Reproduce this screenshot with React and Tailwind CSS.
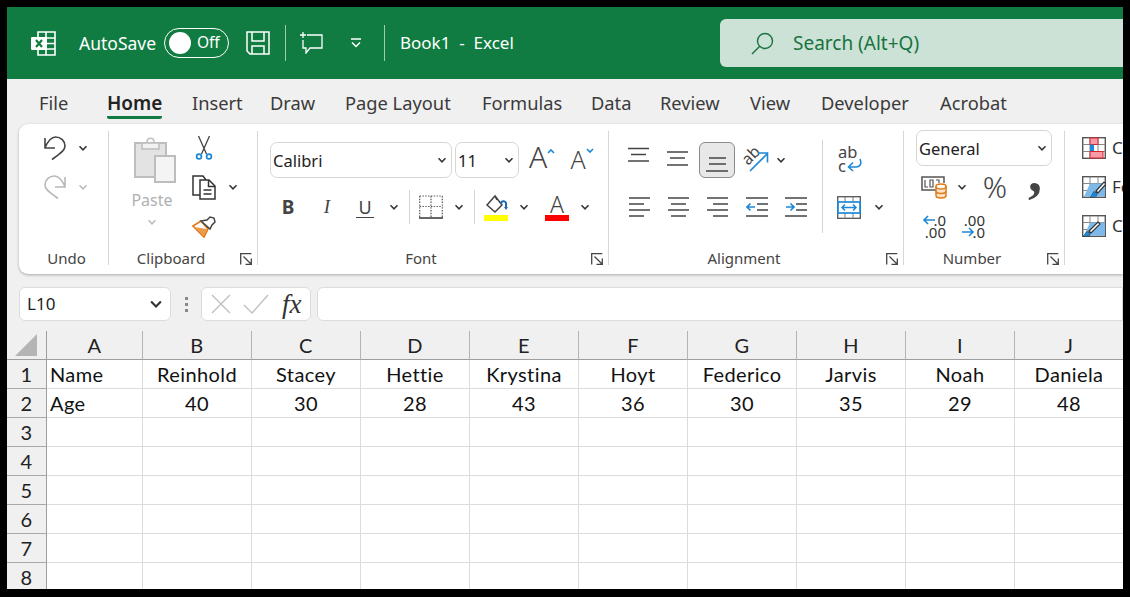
const COLUMNS = ["A", "B", "C", "D", "E", "F", "G", "H", "I", "J", "K"];
const ROW1 = ["Name", "Reinhold", "Stacey", "Hettie", "Krystina", "Hoyt", "Federico", "Jarvis", "Noah", "Daniela", ""];
const ROW2 = ["Age", "40", "30", "28", "43", "36", "30", "35", "29", "48", ""];
const TABS = [
  ["File", "w-[68px]"],
  ["Home", "w-[85px]"],
  ["Insert", "w-[78px]"],
  ["Draw", "w-[75px]"],
  ["Page Layout", "w-[137px]"],
  ["Formulas", "w-[109px]"],
  ["Data", "w-[69px]"],
  ["Review", "w-[90px]"],
  ["View", "w-[71px]"],
  ["Developer", "w-[119px]"],
  ["Acrobat", "w-[90px]"],
];

function Chev({ color = "#333", size = 10 }) {
  return (
    <svg width={size} height={size} viewBox="0 0 10 10" className="shrink-0">
      <path d="M1.5 3.2 5 6.8 8.5 3.2" fill="none" stroke={color} strokeWidth="1.5" />
    </svg>
  );
}

function Launcher() {
  return (
    <svg width="12" height="12" viewBox="0 0 12 12" className="shrink-0 mt-[2px]">
      <path d="M.7 11.5V.7h10.6M3.5 3.5l7.5 7.5M5.5 11.3h5.8V5.5" fill="none" stroke="#444" strokeWidth="1.3" />
    </svg>
  );
}

function Sep({ h = "h-[34px]", cls = "" }) {
  return <div className={`w-px bg-[#d4d4d4] shrink-0 ${h} ${cls}`} />;
}

function Lines({ rows, w = 22, h = 24 }) {
  return (
    <svg width={w} height={h} viewBox={`0 0 ${w} ${h}`} className="shrink-0">
      {rows.map(([a, b, y], i) => (
        <line key={i} x1={a} x2={b} y1={y} y2={y} stroke="#444" strokeWidth="1.4" />
      ))}
    </svg>
  );
}

function Group({ label, launcher = true, widthClass, children, last = false, labelClass = "pr-[7px]" }) {
  return (
    <section className={`flex flex-col h-[134px] shrink-0 ${widthClass} ${last ? "" : "border-r border-[#d6d6d6]"}`}>
      <div className="flex-1 min-h-0">{children}</div>
      {label ? (
        <div className="flex items-center h-[20px] -mb-[3px] pr-[5px]">
          <div className={`flex-1 text-center text-[15px] text-[#444] ${labelClass}`}>{label}</div>
          {launcher ? <Launcher /> : null}
        </div>
      ) : null}
    </section>
  );
}

function Undo({ color }) {
  return (
    <svg width="24" height="26" viewBox="0 0 24 26" fill="none" stroke={color} strokeWidth="1.6">
      <path d="M2 3v10h10M2 12.7C5 6 8 2 12.5 2 18 2 22 6 22 11c0 4-3 6-13 13.5" />
    </svg>
  );
}

function Excel() {
  return (
    <svg width="25" height="25" viewBox="0 0 25 25">
      <path d="M7 1h17v23H7z" fill="none" stroke="#fff" strokeWidth="1.6" />
      <path d="M15 1v23M15 7h9M15 12.5h9M15 18h9M7 18h8" stroke="#fff" strokeWidth="1.6" />
      <rect x="0" y="6" width="16" height="13" rx="1" fill="#fff" />
      <path d="M5 9l6 7M11 9l-6 7" stroke="#107c41" strokeWidth="2.2" />
    </svg>
  );
}

function Paste() {
  return (
    <svg width="42" height="46" viewBox="0 0 42 46">
      <rect x="1" y="6" width="31" height="34" fill="#e3e3e3" stroke="#bdbdbd" strokeWidth="2" />
      <path d="M8 6h17v6H8z" fill="#f2f2f2" stroke="#bdbdbd" strokeWidth="1.5" />
      <path d="M13 5c0-5 7-5 7 0" fill="none" stroke="#bdbdbd" strokeWidth="1.5" />
      <rect x="21" y="19" width="20" height="26" fill="#f4f4f4" stroke="#bdbdbd" strokeWidth="2" />
    </svg>
  );
}

function Scissors() {
  return (
    <svg width="18" height="24" viewBox="0 0 18 24" fill="none">
      <path d="M3.5 0l8 18M14.5 0l-8 18" stroke="#444" strokeWidth="1.3" />
      <circle cx="4" cy="20.5" r="2.4" stroke="#1e88d8" strokeWidth="1.7" />
      <circle cx="14" cy="20.5" r="2.4" stroke="#1e88d8" strokeWidth="1.7" />
    </svg>
  );
}

function Copy() {
  return (
    <svg width="24" height="25" viewBox="0 0 24 25" fill="none" stroke="#333" strokeWidth="1.5">
      <path d="M8 20H1V1h10l3 4" />
      <path d="M8 5h9l6 6v13H8z" fill="#fff" />
      <path d="M16.5 5v6.500h6.500M11.500 15h8M11.500 19h8" />
    </svg>
  );
}

function Brush() {
  return (
    <svg width="24" height="23" viewBox="0 0 24 23" fill="none">
      <path d="M1 11l8-5 7 8-4 8z" fill="#fff" stroke="#e07b1a" strokeWidth="1.7" />
      <path d="M2 12l13 2-3 7z" fill="#ee9a4b" />
      <path d="M9 6l6-1 3-3 4 1 1 4-3 3-2 4z" fill="#fff" stroke="#444" strokeWidth="1.5" />
    </svg>
  );
}

function FillColor() {
  return (
    <svg width="24" height="24" viewBox="0 0 24 24" fill="none" className="block">
      <path d="M3 12l8-9 7 9-7 7z" stroke="#444" strokeWidth="1.5" />
      <path d="M11 3l2 4" stroke="#444" strokeWidth="1.5" />
      <path d="M17 11c0-3 4-4 5-1v4" stroke="#1b6cb5" strokeWidth="2" />
      <path d="M20 14l2 3 2-3z" fill="#1b6cb5" />
    </svg>
  );
}

function Borders() {
  return (
    <svg width="24" height="24" viewBox="0 0 24 24" fill="none" stroke="#555" strokeWidth="1.2" strokeDasharray="1.4 1.4">
      <path d="M.7 1h22.6M.7 1v21M23.300 1v21M12 1v21M.7 11.500h22.600" />
      <path d="M0 23h24" strokeDasharray="none" stroke="#333" strokeWidth="1.6" />
    </svg>
  );
}

function Indent({ flip }) {
  return (
    <svg width="22" height="20" viewBox="0 0 22 20" fill="none">
      <path d="M0 1h22M11 7h11M11 13h11M0 19h22" stroke="#444" strokeWidth="1.4" />
      {flip ? (
        <path d="M1 10h8M4.500 6.500 1 10l3.500 3.500" stroke="#1e88d8" strokeWidth="1.7" />
      ) : (
        <path d="M1 10h8M5.500 6.500 9 10l-3.500 3.500" stroke="#1e88d8" strokeWidth="1.7" />
      )}
    </svg>
  );
}

function SheetIcon({ kind }) {
  return (
    <svg width="24" height="22" viewBox="0 0 24 22" fill="none" className="shrink-0">
      <rect x=".7" y=".7" width="22.600" height="20.600" fill="#fff" stroke="#555" strokeWidth="1.4" />
      <path d="M8 .7v20.600M16 .7v20.600M.7 7.500h22.600M.7 14.500h22.600" stroke="#888" strokeWidth="1" />
      {kind === "cond" ? (
        <>
          <rect x="8" y="1" width="8" height="6.500" fill="#f79aa6" stroke="#d8242f" />
          <rect x="8" y="7.500" width="4" height="7" fill="#1e88d8" />
          <rect x="8" y="14.500" width="13" height="6.500" fill="#f79aa6" stroke="#d8242f" />
        </>
      ) : null}
      {kind === "table" ? (
        <>
          <path d="M8 7.500h15v13H2z" fill="#7db9ea" />
          <path d="M9 21l3-5 3 1-1 3zM14 15l8-9 2 2-8 9z" fill="#fff" stroke="#333" strokeWidth="1.200" />
          <path d="M8 21l4-5 3 1-1 4z" fill="#1e88d8" />
        </>
      ) : null}
      {kind === "cell" ? (
        <>
          <path d="M8 7.500h15v13H2z" fill="#7db9ea" />
          <path d="M2 21l3-4 3 1-1 3zM7 16l9-9 2 2-9 9z" fill="#fff" stroke="#333" strokeWidth="1.200" />
          <path d="M1 21l4-4 3 1-1 3z" fill="#1e88d8" />
        </>
      ) : null}
    </svg>
  );
}

function Select({ children, widthClass }) {
  return (
    <div className={`flex items-center justify-between ${widthClass} h-[36px] shrink-0 rounded-[7px] border border-[#d6d6d6] bg-white pl-[2px] pr-[4px] text-[16.5px] text-[#222]`}>
      <span className="pt-[2px]">{children}</span>
      <Chev />
    </div>
  );
}

function Slot({ w, h = "h-[34px]", children, cls = "" }) {
  return <div className={`flex items-center justify-center shrink-0 ${w} ${h} ${cls}`}>{children}</div>;
}

function Ribbon() {
  return (
    <div className="flex ml-[12px] h-[150px] shrink-0 rounded-l-[9px] bg-white pt-[7px] shadow-[0_1px_3px_rgba(0,0,0,0.3)] overflow-hidden">
      <Group label="Undo" launcher={false} widthClass="w-[90px] pl-[17px]" labelClass="pr-[6px]">
        <div className="flex flex-col gap-[5px]">
          <div className="flex items-center h-[34px]">
            <Slot w="w-[38px]"><Undo color="#444" /></Slot>
            <div className="ml-[4px]"><Chev /></div>
          </div>
          <div className="flex items-center h-[34px]">
            <Slot w="w-[38px]"><div className="-scale-x-100"><Undo color="#b8b8b8" /></div></Slot>
            <div className="ml-[4px]"><Chev color="#bbb" /></div>
          </div>
        </div>
      </Group>

      <Group label="Clipboard" widthClass="w-[149px]">
        <div className="flex pl-[20px]">
          <div className="flex flex-col items-center w-[46px] pt-[6px]">
            <div className="ml-[6px]"><Paste /></div>
            <div className="mt-[6px] leading-[22px] text-[16px] text-[#b0b0b0]">Paste</div>
            <div className="mt-[6px]"><Chev color="#bbb" /></div>
          </div>
          <div className="flex flex-col gap-[5px] ml-[8px]">
            <div className="flex items-center h-[34px]"><Slot w="w-[42px]"><Scissors /></Slot></div>
            <div className="flex items-center h-[34px]">
              <Slot w="w-[42px]"><Copy /></Slot>
              <div className="ml-[3px]"><Chev /></div>
            </div>
            <div className="flex items-center h-[34px]"><Slot w="w-[42px]"><Brush /></Slot></div>
          </div>
        </div>
      </Group>

      <Group label="Font" widthClass="w-[351px]">
        <div className="pl-[12px] pt-[11px]">
          <div className="flex items-center h-[36px]">
            <Select widthClass="w-[182px]">Calibri</Select>
            <div className="ml-[3px]"><Select widthClass="w-[64px]">11</Select></div>
            <Slot w="w-[40px]" h="h-[36px]" cls="ml-[3px]">
              <span className="text-[30px] leading-none font-light -mt-[6px] text-[#444]">A</span>
              <svg width="8" height="6" viewBox="0 0 8 6" className="self-start mt-[6px]"><path d="M1 5l3-3 3 3" fill="none" stroke="#1e88d8" strokeWidth="1.600" /></svg>
            </Slot>
            <Slot w="w-[40px]" h="h-[36px]">
              <span className="text-[25px] leading-none font-light -mt-[1px] text-[#444]">A</span>
              <svg width="8" height="6" viewBox="0 0 8 6" className="self-start mt-[6px]"><path d="M1 1l3 3 3-3" fill="none" stroke="#1e88d8" strokeWidth="1.600" /></svg>
            </Slot>
          </div>
          <div className="flex items-center h-[34px] mt-[12px]">
            <Slot w="w-[36px]"><span className="text-[19px] font-bold text-[#444]">B</span></Slot>
            <Slot w="w-[42px]"><span className="text-[19px] italic text-[#444] font-['Liberation_Serif',serif]">I</span></Slot>
            <Slot w="w-[34px]"><span className="text-[18px] leading-[20px] border-b-[1.5px] border-[#444] px-[2px] text-[#444]">U</span></Slot>
            <Slot w="w-[24px]"><Chev /></Slot>
            <Sep cls="ml-[3px]" />
            <Slot w="w-[42px]"><Borders /></Slot>
            <Slot w="w-[14px]"><Chev /></Slot>
            <Sep cls="ml-[8px]" />
            <Slot w="w-[42px]">
              <div className="flex flex-col items-start w-[24px]">
                <FillColor />
                <div className="w-[24px] h-[6px] -mt-[2px] bg-[#ffff00]" />
              </div>
            </Slot>
            <Slot w="w-[14px]"><Chev /></Slot>
            <Slot w="w-[44px]" cls="ml-[4px]">
              <div className="flex flex-col items-center w-[24px]">
                <span className="text-[23px] leading-[22px] font-light text-[#444]">A</span>
                <div className="w-[24px] h-[6px] bg-[#ff0000]" />
              </div>
            </Slot>
            <Slot w="w-[12px]"><Chev /></Slot>
          </div>
        </div>
      </Group>

      <Group label="Alignment" widthClass="w-[295px]">
        <div className="flex pl-[11px]">
          <div className="w-[202px] pt-[11px]">
            <div className="flex items-center h-[36px]">
              <Slot w="w-[38px]" h="h-[36px]"><Lines h={36} rows={[[0, 21, 6.5], [3, 18, 12.5], [0, 21, 19]]} /></Slot>
              <Slot w="w-[40px]" h="h-[36px]"><Lines h={36} rows={[[0, 21, 10], [3, 18, 16], [0, 21, 23]]} /></Slot>
              <Slot w="w-[36px]" h="h-[36px]" cls="ml-[1px] rounded-[6px] border border-[#8a8a8a] bg-[#e8e8e8]"><Lines h={34} rows={[[3, 20, 15], [3, 20, 21], [0, 22, 28]]} /></Slot>
              <Slot w="w-[38px]" h="h-[36px]" cls="ml-[3px] relative">
                <span className="absolute left-[3px] top-[4px] -rotate-45 text-[16px] leading-[18px] text-[#444]">ab</span>
                <svg width="24" height="24" viewBox="0 0 24 24" className="absolute left-[8px] top-[7px]"><path d="M4 22 21 5M12 4h9.500v9.500" fill="none" stroke="#1e88d8" strokeWidth="1.600" /></svg>
              </Slot>
              <Chev />
            </div>
            <div className="flex items-center h-[34px] mt-[12px]">
              <Slot w="w-[39px]"><Lines rows={[[0, 21, 3], [0, 15, 9], [0, 21, 15], [0, 15, 21]]} /></Slot>
              <Slot w="w-[39px]"><Lines rows={[[0, 21, 3], [3, 18, 9], [0, 21, 15], [3, 18, 21]]} /></Slot>
              <Slot w="w-[39px]"><Lines rows={[[0, 21, 3], [6, 21, 9], [0, 21, 15], [6, 21, 21]]} /></Slot>
              <Slot w="w-[39px]"><Indent flip /></Slot>
              <Slot w="w-[39px]"><Indent /></Slot>
            </div>
          </div>
          <Sep h="h-[93px]" cls="mt-[9px]" />
          <div className="pt-[11px]">
            <Slot w="w-[56px]" h="h-[36px]">
              <div className="flex flex-col items-start w-[26px] h-[30px] text-[16.5px] leading-[14px] text-[#444]">
                <span>ab</span>
                <div className="flex items-center">
                  <span>c</span>
                  <svg width="15" height="14" viewBox="0 0 15 14" className="ml-[1px] -mt-[2px]"><path d="M13 1c2 5 0 8-4 8H2M6 4.500 1.500 9 6 13" fill="none" stroke="#1e88d8" strokeWidth="1.600" /></svg>
                </div>
              </div>
            </Slot>
            <div className="flex items-center h-[34px] mt-[12px]">
              <Slot w="w-[51px]">
                <svg width="24" height="23" viewBox="0 0 24 23" fill="none">
                  <rect x=".7" y=".7" width="22.600" height="21.600" stroke="#555" strokeWidth="1.300" />
                  <path d="M8 .7v21M16 .7v21" stroke="#777" />
                  <rect x="1" y="6" width="22" height="11" fill="#fff" stroke="#1e88d8" strokeWidth="1.700" />
                  <path d="M5 11.500h14M8 8.500l-3 3 3 3M16 8.500l3 3-3 3" stroke="#1e88d8" strokeWidth="1.500" />
                </svg>
              </Slot>
              <Chev />
            </div>
          </div>
        </div>
      </Group>

      <Group label="Number" widthClass="w-[161px]">
        <div className="pl-[12px] -mt-px">
          <Select widthClass="w-[136px]">General</Select>
          <div className="flex items-center h-[34px] mt-[4px]">
            <Slot w="w-[30px]" cls="ml-[3px]">
              <svg width="26" height="24" viewBox="0 0 26 24" fill="none">
                <path d="M15 15H1V2h22v6" stroke="#555" strokeWidth="1.500" />
                <path d="M4 5v7h3M9 5h3v7H9zM15 5h3v3" stroke="#555" strokeWidth="1.200" />
                <path d="M15 11.500v9c0 3.300 10 3.300 10 0v-9z" fill="#fbe3c9" stroke="#e07b1a" strokeWidth="1.500" />
                <ellipse cx="20" cy="11.500" rx="5" ry="2.500" fill="#fff" stroke="#e07b1a" strokeWidth="1.500" />
                <path d="M15 16c0 3.300 10 3.300 10 0" stroke="#e07b1a" strokeWidth="1.500" />
              </svg>
            </Slot>
            <Slot w="w-[10px]" cls="ml-[8px]"><Chev /></Slot>
            <Slot w="w-[44px]" cls="ml-[6px]"><span className="text-[30px] font-light leading-none text-[#444]">%</span></Slot>
            <Slot w="w-[36px]"><span className="text-[56px] font-bold leading-none -mt-[30px] text-[#444] font-['Liberation_Serif',serif]">,</span></Slot>
          </div>
          <div className="flex items-center h-[34px] mt-[5px]">
            <Slot w="w-[31px]" cls="ml-[2px]">
              <div className="flex flex-col items-end w-[25px] text-[15px] leading-[12px] text-[#333]">
                <div className="flex items-center">
                  <svg width="14" height="10" viewBox="0 0 14 10" className="shrink-0 mr-[-3px]"><path d="M13 5H2M6 1 2 5l4 4" fill="none" stroke="#1e88d8" strokeWidth="1.600" /></svg>
                  <span>.0</span>
                </div>
                <span>.00</span>
              </div>
            </Slot>
            <Slot w="w-[31px]" cls="ml-[8px]">
              <div className="flex flex-col items-end w-[25px] text-[15px] leading-[12px] text-[#333]">
                <span>.00</span>
                <div className="flex items-center">
                  <svg width="14" height="10" viewBox="0 0 14 10" className="shrink-0 mr-[-3px]"><path d="M1 5h11M8 1l4 4-4 4" fill="none" stroke="#1e88d8" strokeWidth="1.600" /></svg>
                  <span>.0</span>
                </div>
              </div>
            </Slot>
          </div>
        </div>
      </Group>

      <Group widthClass="w-[200px] pl-[17px]" last>
        <div className="flex flex-col gap-[5px] text-[17px] text-[#333] whitespace-nowrap">
          <div className="flex items-center gap-[6px] h-[34px]"><SheetIcon kind="cond" /><span>Conditional Formatting</span></div>
          <div className="flex items-center gap-[6px] h-[34px]"><SheetIcon kind="table" /><span>Format as Table</span></div>
          <div className="flex items-center gap-[6px] h-[34px]"><SheetIcon kind="cell" /><span>Cell Styles</span></div>
        </div>
      </Group>
    </div>
  );
}

function HeaderCell({ children }) {
  return (
    <div className="flex items-center justify-center h-[29px] border-r border-b border-r-[#b4b4b4] border-b-[#9e9e9e] bg-[#f0f0f0] text-[#222]">
      {children}
    </div>
  );
}

function Sheet() {
  const rows = [ROW1, ROW2, [], [], [], [], [], []];
  return (
    <div className="grid grid-cols-[40px_96px_repeat(10,109px)] auto-rows-[29px] mt-[10px] font-['Lato','Liberation_Sans',sans-serif] text-[20px] tracking-[0.4px] leading-none">
      <div className="flex items-center justify-center h-[29px] border-r border-b border-r-[#9e9e9e] border-b-[#9e9e9e] bg-[#f0f0f0]">
        <svg width="22" height="22" viewBox="0 0 22 22" className="-ml-[2px]"><path d="M22 0v22H0z" fill="#b5b5b5" /></svg>
      </div>
      {COLUMNS.map((c) => (
        <HeaderCell key={c}>{c}</HeaderCell>
      ))}
      {rows.map((row, r) => (
        <div key={r} className="contents">
          <div className="flex items-center justify-center h-[29px] border-r border-b border-r-[#9e9e9e] border-b-[#a8a8a8] bg-[#f0f0f0] text-[#222]">{r + 1}</div>
          {COLUMNS.map((c, i) => (
            <div
              key={c}
              className={`flex items-center h-[29px] bg-white border-r border-b border-[#dcdcdc] text-[#111] ${i === 0 ? "justify-start pl-[3px]" : "justify-center"}`}
            >
              {row[i] || ""}
            </div>
          ))}
        </div>
      ))}
    </div>
  );
}

export default function App() {
  return (
    <div className="w-[1130px] h-[597px] bg-black pl-[7px] pt-[7px] overflow-hidden font-['Noto_Sans','Open_Sans',sans-serif]">
      <div className="flex flex-col w-[1116px] h-[582px] bg-[#f0f0f0] overflow-hidden">
        <header className="flex items-center h-[72px] shrink-0 bg-[#107c41] text-white">
          <div className="ml-[24px]"><Excel /></div>
          <span className="ml-[23px] w-[85px] text-[17.5px]">AutoSave</span>
          <div className="flex items-center w-[65px] h-[30px] rounded-full border border-white pl-[4px]">
            <div className="w-[22px] h-[22px] rounded-full bg-white" />
            <span className="ml-[6px] text-[15.5px]">Off</span>
          </div>
          <svg width="24" height="24" viewBox="0 0 24 24" fill="none" stroke="#fff" strokeWidth="1.500" className="ml-[17px]">
            <path d="M1 1h22v22H4l-3-3z" />
            <path d="M6 1v9h12V1M6 23v-8h12v8" />
          </svg>
          <div className="ml-[15px] w-px h-[36px] bg-[#9fcbb2]" />
          <svg width="24" height="22" viewBox="0 0 24 22" fill="none" stroke="#fff" strokeWidth="1.300" className="ml-[13px]">
            <path d="M8 3h15v13H11l-4 5v-5H4V8M4 0v6M1 3h6" />
          </svg>
          <svg width="12" height="10" viewBox="0 0 12 10" fill="none" stroke="#fff" strokeWidth="1.500" className="ml-[27px]">
            <path d="M1 1h10M2 4.500l4 4 4-4" />
          </svg>
          <div className="ml-[22px] w-px h-[36px] bg-[#9fcbb2]" />
          <span className="ml-[15px] text-[17px] whitespace-pre">Book1  -  Excel</span>
          <div className="ml-auto flex items-center w-[403px] shrink-0 h-[48px] rounded-l-[6px] bg-[#cde2d6] pl-[31px] text-[#17733f]">
            <svg width="23" height="23" viewBox="0 0 23 23" fill="none" stroke="#17733f" strokeWidth="1.400">
              <circle cx="14" cy="9" r="7.500" />
              <path d="M8.500 14.500 1 22" />
            </svg>
            <span className="ml-[19px] text-[19px]">Search (Alt+Q)</span>
          </div>
        </header>

        <nav className="flex items-start h-[45px] shrink-0 pl-[32px] pt-[12px] text-[18.3px] leading-[24px] text-[#3b3b3b]">
          {TABS.map(([name, w]) => (
            <div key={name} className={`shrink-0 ${w}`}>
              {name === "Home" ? (
                <span className="inline-block text-[19px] font-semibold text-[#222] border-b-[3px] border-[#107c41] rounded-b-[2px] pb-[1px]">{name}</span>
              ) : (
                name
              )}
            </div>
          ))}
        </nav>

        <Ribbon />

        <div className="flex items-center h-[34px] shrink-0 mt-[13px] ml-[12px]">
          <div className="flex items-center justify-between w-[152px] h-[34px] rounded-[6px] border border-[#dcdcdc] bg-white pl-[7px] pr-[7px] text-[17px] text-[#222]">
            <span>L10</span>
            <Chev size={14} />
          </div>
          <div className="flex flex-col gap-[3px] ml-[14px] mr-[13px]">
            <div className="w-[3px] h-[3px] bg-[#888]" />
            <div className="w-[3px] h-[3px] bg-[#888]" />
            <div className="w-[3px] h-[3px] bg-[#888]" />
          </div>
          <div className="flex items-center w-[110px] h-[34px] rounded-[6px] border border-[#dcdcdc] bg-white">
            <svg width="20" height="20" viewBox="0 0 20 20" fill="none" stroke="#c0c0c0" strokeWidth="1.400" className="ml-[9px] shrink-0"><path d="M1 1l18 18M19 1 1 19" /></svg>
            <svg width="26" height="20" viewBox="0 0 26 20" fill="none" stroke="#c0c0c0" strokeWidth="1.400" className="ml-[12px] shrink-0"><path d="M1 11l8 8L25 1" /></svg>
            <span className="ml-[13px] text-[27px] italic leading-none text-[#333] font-['Liberation_Serif',serif]">fx</span>
          </div>
          <div className="ml-[6px] flex-1 h-[34px] rounded-l-[6px] border border-[#dcdcdc] bg-white" />
        </div>

        <Sheet />
      </div>
    </div>
  );
}
